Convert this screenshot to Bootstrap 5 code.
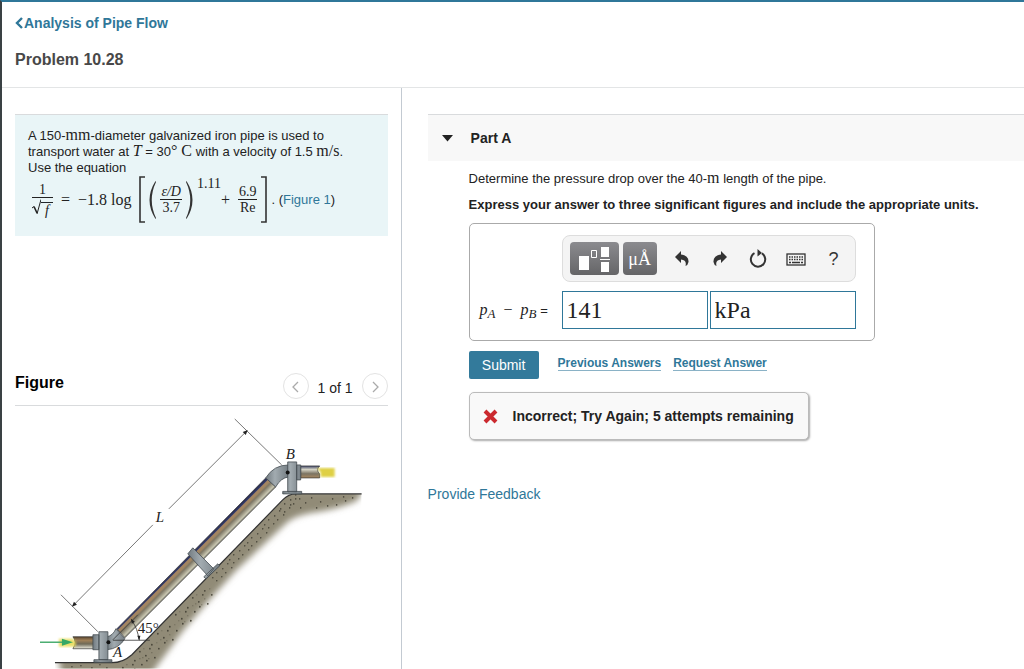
<!DOCTYPE html>
<html lang="en">
<head>
<meta charset="utf-8">
<meta name="viewport" content="width=device-width, initial-scale=1">
<title>Problem 10.28</title>
<link href="https://cdn.jsdelivr.net/npm/bootstrap@5.3.0/dist/css/bootstrap.min.css" rel="stylesheet">
<style>
  :root { --brand: #2f7799; --rule: #d9dbdd; }
  body { font-family: "Liberation Sans", Arial, sans-serif; font-size: 13px; line-height: 16px; color: #222; background: #fff; }
  a { color: var(--brand); text-decoration: none; }
  .page { border-left: 2px solid #3a4144; border-top: 2px solid var(--brand); min-height: 100vh; }
  .page-head { border-bottom: 1px solid #e3e5e6; padding: 12px 13px 17px; }
  .crumb { font-size: 14px; line-height: 18px; font-weight: bold; }
  .title { font-size: 16px; line-height: 20px; font-weight: bold; color: #484848; margin: 17px 0 0; }
  .side { flex: 0 0 39.1%; padding: 26px 13px 0; border-right: 1px solid #c3cad2; }
  .main-col { padding: 26px 0 0 26px; min-width: 0; }
  .intro { background: #e9f5f7; border-top: 1px solid var(--rule); padding: 13px 13px 13px; }
  .math { font-family: "Liberation Serif", "Times New Roman", serif; font-size: 16px; line-height: 16px; }
  .unit { line-height: 0; }
  .eq { height: 47px; }
  .frac { display: inline-flex; flex-direction: column; align-items: center; font-size: 14px; line-height: 15px; }
  .frac > :first-child { border-bottom: 1px solid #222; align-self: stretch; text-align: center; padding: 0 1px; }
  .power { font-size: 14px; align-self: flex-start; }
  .fig-head { margin-top: 137px; padding-bottom: 6px; border-bottom: 1px solid var(--rule); }
  .fig-head h2 { font-size: 16px; line-height: 20px; font-weight: bold; color: #000; margin: 0; }
  .pager { width: 26px; height: 26px; border: 1px solid #e3e3e3; border-radius: 50%; background: #fff; padding: 0; }
  .pager-text { font-size: 14px; margin: 4px 9px 0; }
  .part-head { background: #f8f8f8; border-top: 1px solid var(--rule); height: 47px; padding-left: 14px; }
  .part-head button { border: 0; background: none; padding: 0; font-size: 14px; font-weight: bold; color: #222; gap: 18px; }
  .part-body { padding: 10px 20px 0 41px; }
  .part-body p { margin-bottom: 10px; }
  .answer-box { display: inline-block; border: 1px solid #aaa; border-radius: 5px; padding: 11px 18px 11px 10px; }
  .tools { background: #f4f4f4; border: 1px solid #ddd; border-radius: 8px; height: 47px; padding-left: 7px; }
  .tools button { flex: none; border: 0; background: none; padding: 0; display: flex; align-items: center; justify-content: center; width: 34px; height: 33px; color: #333; }
  .tools .pad { background: linear-gradient(#8b8b8f, #656567); border-radius: 4px; color: #fff; }
  .tools .pad-wide { width: 49px; }
  .tools .glyph { font-size: 18px; line-height: 20px; }
  .answer-grid { display: grid; grid-template-columns: 82px 294px; row-gap: 9px; align-items: center; }
  .answer-grid sub { font-size: 13px; }
  .entry { border: 1px solid var(--brand); height: 38px; width: 146px; padding: 0 4px; font-family: "Liberation Serif", serif; font-size: 24px; color: #222; }
  .actions { margin-top: 10px; }
  .submit { background: #337a9b; color: #fff; border: 0; border-radius: 2px; width: 70px; height: 28px; font-size: 14px; padding: 0; margin-right: 19px; }
  .act { font-size: 12px; font-weight: bold; line-height: 13px; border-bottom: 1px solid #8ab2c6; margin-right: 12px; margin-bottom: 2px; }
  .notice { display: inline-flex; align-items: center; background: #f9f9f9; border: 1px solid #bbb; border-radius: 5px; box-shadow: 1px 1px 2px #aaa; height: 48px; padding: 0 14px 0 13px; margin-top: 13px; font-size: 14px; font-weight: bold; gap: 15px; }
  .feedback { font-size: 14px; margin-top: 46px; }
</style>
</head>
<body>
<div class="page d-flex flex-column">
  <header class="page-head">
    <a href="#" class="crumb d-inline-flex align-items-center"><svg width="9" height="12" viewBox="0 0 9 12" fill="none" stroke="currentColor" stroke-width="2.4"><path d="M7 1 2 6l5 5"/></svg>Analysis of Pipe Flow</a>
    <h1 class="title">Problem 10.28</h1>
  </header>
  <div class="d-flex flex-grow-1">
    <aside class="side">
      <section class="intro">
        <div>A 150-<span class="math unit">mm</span>-diameter galvanized iron pipe is used to</div>
        <div class="text-nowrap">transport water at <i class="math unit">T</i> = 30<span class="math unit">° C</span> with a velocity of 1.5 <span class="math unit">m/s</span>.</div>
        <div>Use the equation</div>
        <div class="d-flex align-items-center eq">
          <span class="frac math ms-1"><span>1</span>
            <span class="d-flex"><svg width="9" height="17" viewBox="0 0 9 17" fill="none" stroke="#222"><path d="M0 10l2-1.5" /><path d="M2 8.5 5 15" stroke-width="1.6"/><path d="M5 16 9 1.500"/></svg><i class="border-top border-dark mt-1 px-1">f</i></span>
          </span>
          <span class="math ms-2">=</span>
          <span class="math ms-2">−1.8</span><span class="math ms-1">log</span>
          <svg class="ms-2" width="6" height="47" viewBox="0 0 6 47" fill="none" stroke="#333" stroke-width="1.600"><path d="M6 1H1v45h5"/></svg>
          <svg class="ms-1" width="7" height="38" viewBox="0 0 7 38" fill="#333"><path d="M6.500 0Q-5.500 19 6.500 38L7 37Q-1.500 19 7 1z"/></svg>
          <span class="frac math mx-1"><i>ε/D</i><span>3.7</span></span>
          <svg width="7" height="38" viewBox="0 0 7 38" fill="#333"><path d="M.5 0Q12.500 19 .5 38L0 37Q8.500 19 0 1z"/></svg>
          <span class="math power ms-1">1.11</span>
          <span class="math">+</span>
          <span class="frac math ms-2"><span>6.9</span><span>Re</span></span>
          <svg class="ms-1" width="6" height="47" viewBox="0 0 6 47" fill="none" stroke="#333" stroke-width="1.600"><path d="M0 1h5v45H0"/></svg>
          <span class="ms-1 text-nowrap">. (<a href="#figure">Figure 1</a>)</span>
        </div>
      </section>

      <section id="figure">
        <div class="fig-head d-flex align-items-center justify-content-between">
          <h2 class="align-self-start">Figure</h2>
          <div class="d-flex align-items-center">
            <button class="pager" aria-label="Previous figure"><svg width="12" height="14" viewBox="0 0 12 14" fill="none" stroke="#aaa" stroke-width="1.300"><path d="M8 2 3 7l5 5"/></svg></button>
            <span class="pager-text">1 of 1</span>
            <button class="pager" aria-label="Next figure"><svg width="12" height="14" viewBox="0 0 12 14" fill="none" stroke="#aaa" stroke-width="1.300"><path d="M4 2l5 5-5 5"/></svg></button>
          </div>
        </div>
        <svg class="d-block w-100" viewBox="15 406 373 263" role="img" aria-label="Inclined pipe of length L between A and B at 45 degrees" font-family="Liberation Serif, serif" font-size="15">
          <defs>
            <linearGradient id="slant" gradientUnits="userSpaceOnUse" x1="186" y1="559" x2="195" y2="568">
              <stop offset="0" stop-color="#252a52"/><stop offset=".14" stop-color="#3a406a"/><stop offset=".2" stop-color="#a58562"/><stop offset=".36" stop-color="#a08461"/><stop offset=".5" stop-color="#7c7664"/><stop offset=".85" stop-color="#c5c3ae"/><stop offset="1" stop-color="#8a8878"/>
            </linearGradient>
            <linearGradient id="flatA" x2="0" y2="1"><stop offset="0" stop-color="#59452f"/><stop offset=".3" stop-color="#a08058"/><stop offset=".6" stop-color="#6f6a58"/><stop offset="1" stop-color="#eeece0"/></linearGradient>
            <linearGradient id="flatB" x2="0" y2="1"><stop offset="0" stop-color="#414869"/><stop offset=".3" stop-color="#d5d3c5"/><stop offset=".65" stop-color="#7b7463"/><stop offset="1" stop-color="#a98860"/></linearGradient>
            <linearGradient id="metal"><stop offset="0" stop-color="#727b81"/><stop offset=".4" stop-color="#a2abb0"/><stop offset="1" stop-color="#747d83"/></linearGradient>
            <filter id="soft"><feGaussianBlur stdDeviation="3"/></filter>
            <filter id="glow"><feGaussianBlur stdDeviation="1"/></filter>
            <clipPath id="soil"><path d="M55 663H112Q123 663 132 655L283 500Q289 494 296 494H362V669H55z"/></clipPath>
            <g id="grit" stroke-linecap="round" fill="none">
              <path d="M140 652h0m6 4h0m4-7h0m-3 12h0m5-16h0m7 4h0m-4 9h0" stroke="#4b483c" stroke-width="1.800"/>
              <path d="M143 658h0m1-9h0m8 4h0m5-10h0m-8 16h0" stroke="#666252" stroke-width="1.200"/>
            </g>
            <path id="grit-thin" d="M213 578h0m4 3h0m0-8h0m5 4h0m1-8h0m3 4h0m2-9h0m4 4h0" stroke="#4b483c" stroke-width="1.600" stroke-linecap="round" fill="none"/>
          </defs>
          <g clip-path="url(#soil)">
            <path d="M58 655H112L283 490H364L357 501Q338 509 318 512Q295 515 287 523L236 571L209 601L184 630L147 680H62z" fill="#918b77" filter="url(#soft)"/>
            <use href="#grit"/><use href="#grit" x="-17" y="16"/><use href="#grit" x="18" y="-18"/><use href="#grit" x="36" y="-37"/><use href="#grit" x="53" y="-54"/>
            <use href="#grit-thin"/><use href="#grit-thin" x="17" y="-18"/><use href="#grit-thin" x="35" y="-35"/><use href="#grit-thin" x="52" y="-53"/><use href="#grit-thin" x="68" y="-69"/>
            <path d="M72 667h0m9-1h0m11 2h0m8-3h0m7 3h0M291 505h0M296 499h0M301 508h0M306 503h0M312 498h0M317 508h0M321 502h0M328 506h0M333 499h0M337 505h0M344 497h0M346 501h0M353 498h0" stroke="#4b483c" stroke-width="1.600" stroke-linecap="round"/>
          </g>
          <path d="M55 663H112Q123 663 132 655L283 500Q289 494 296 494H362" fill="none" stroke="#333" stroke-width="1.200"/>

          <g stroke="#777" stroke-width="1"><path d="M235 419 282 465M247 431 169 509M153 525 73 606M61 595 98 632"/></g>
          <path d="M248 430l-2 5-3-3zM72 607l2-5 3 3z" fill="#222"/>

          <path d="M117 629 266 478 276 487 125 638z" fill="url(#slant)" stroke="#333" stroke-width=".7"/>
          <path d="M73 637H94V649H73Q77 642 73 637z" fill="url(#flatA)" stroke="#333" stroke-width=".7"/>
          <path d="M59 639h14q5 4 2 8H59z" fill="#e8dc5a" opacity=".9" filter="url(#glow)"/>
          <path d="M40 642.500H65" stroke="#4cae72" stroke-width="1.500"/><path d="M62 639l11 3.500-11 3.500z" fill="#36a865"/>
          <path d="M301 466h19q-4 4 0 8v4h-19z" fill="url(#flatB)" stroke="#333" stroke-width=".7"/>
          <path d="M317 468h18v9h-14q1-6-4-9z" fill="#dfd045" filter="url(#glow)"/>

          <g fill="url(#metal)" stroke="#454d52" stroke-width=".8">
            <path d="M107 637Q113 636 116 629L125 639Q119 649 107 650z"/>
            <path d="M93 635h6v15h-6zM99 632h9v28h-9zM94 660h18v2.500H94z"/>
            <path d="M266 478Q274 465 289 465V477Q281 478 276 487z"/>
            <path d="M297 465h4v15h-4zM288 462h9v30h-9zM283 491.500h19v2.500h-19z"/>
            <path d="M188 554l5-6 21 21-6 7zM204 577l14-13 2 2-14 13z"/>
          </g>
          <circle cx="108.500" cy="642.500" r="2" fill="#111"/><circle cx="288" cy="472.500" r="2" fill="#111"/>
          <path d="M113 640.500H150M113 640 138 615M132 621Q138 629 139 640" fill="none" stroke="#333" stroke-width=".8"/>
          <path d="M131 619l4 3-3 2zM139.500 641l-2-5h3z" fill="#222"/>
          <g fill="#222"><text x="286" y="459" font-style="italic">B</text><text x="156" y="522" font-style="italic">L</text><text x="113" y="657" font-style="italic">A</text><text x="138" y="633">45°</text></g>
        </svg>
      </section>
    </aside>

    <main class="main-col flex-grow-1">
      <div class="part-head d-flex align-items-center">
        <button class="d-flex align-items-center"><svg width="11" height="7" viewBox="0 0 11 7"><path d="M0 0h11L5.500 6.500z" fill="#222"/></svg>Part A</button>
      </div>
      <div class="part-body">
        <p>Determine the pressure drop over the 40-<span class="math unit">m</span> length of the pipe.</p>
        <p class="fw-bold">Express your answer to three significant figures and include the appropriate units.</p>
        <div class="answer-box">
          <div class="answer-grid">
            <span></span>
            <div class="tools d-flex align-items-center">
              <button class="pad pad-wide" aria-label="Templates"><svg width="34" height="28" viewBox="0 0 34 28" fill="#fff"><path d="M2 11h10v14H2z"/><path d="M14.500 5.500h5v7h-5z" fill="none" stroke="#fff"/><path d="M24 2h8v10h-8zM23 14h10v1H23zM24 17h8v10h-8z"/></svg></button>
              <button class="pad math ms-1" aria-label="Units"><span class="glyph">μÅ</span></button>
              <button class="ms-2" aria-label="Undo"><svg width="16" height="16" viewBox="0 0 16 16" fill="currentColor"><path d="M1 6 7 0v3.500Q15 4.500 14.500 11 14 14 11.500 15 13 9 7 8.500V12z"/></svg></button>
              <button class="ms-1" aria-label="Redo"><svg width="16" height="16" viewBox="0 0 16 16" fill="currentColor"><path d="M15 6 9 0v3.500Q1 4.500 1.500 11 2 14 4.500 15 3 9 9 8.500V12z"/></svg></button>
              <button class="ms-1" aria-label="Reset"><svg width="20" height="20" viewBox="0 0 20 20" fill="none" stroke="currentColor" stroke-width="2"><path d="M6.500 4.200a7.200 7.200 0 1 0 7.400.2"/><path d="M9.500 0 14 4 9.500 7.500z" fill="currentColor" stroke="none"/></svg></button>
              <button class="ms-1" aria-label="Keyboard"><svg width="20" height="14" viewBox="0 0 20 14" fill="none" stroke="currentColor"><rect x="1" y="2" width="18" height="11" stroke-width="1.300"/><path d="M3 5h14M3 7.500h14" stroke-width="1.500" stroke-dasharray="1.500 1"/><path d="M3 10.500h2M6 10.500h8M15 10.500h2" stroke-width="1.300"/></svg></button>
              <button class="ms-1 glyph" aria-label="Help">?</button>
            </div>
            <label class="text-nowrap" for="value"><span class="math"><i>p<sub>A</sub></i><span class="mx-1"> − </span><i>p<sub>B</sub></i></span> =</label>
            <div class="d-flex justify-content-between">
              <input class="entry" id="value" type="text" value="141">
              <input class="entry" type="text" value="kPa" aria-label="Units">
            </div>
          </div>
        </div>
        <div class="actions d-flex align-items-center">
          <button class="submit" type="submit">Submit</button>
          <a href="#" class="act">Previous Answers</a>
          <a href="#" class="act">Request Answer</a>
        </div>
        <div class="notice" role="alert"><svg width="15" height="15" viewBox="0 0 15 15" stroke="#cb2a2f" stroke-width="4"><path d="M2 2l11 11M13 2 2 13"/></svg><span class="text-nowrap">Incorrect; Try Again; 5 attempts remaining</span></div>
      </div>
      <div class="feedback"><a href="#">Provide Feedback</a></div>
    </main>
  </div>
</div>
<script src="https://cdn.jsdelivr.net/npm/bootstrap@5.3.0/dist/js/bootstrap.bundle.min.js"></script>
</body>
</html>
